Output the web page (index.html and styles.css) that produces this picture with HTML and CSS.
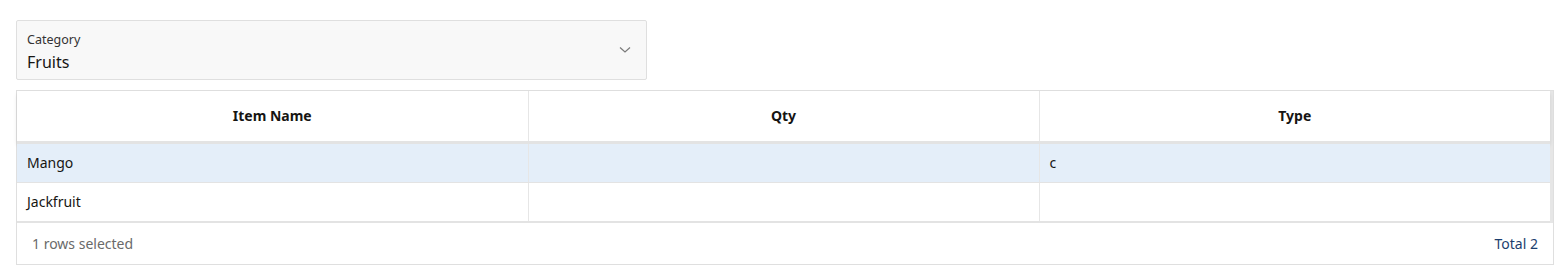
FILE: index.html
```html
<!DOCTYPE html>
<html lang="en">
<head>
  <meta charset="UTF-8" />
  <title>Items by Category</title>
  <link rel="stylesheet" href="styles.css">
</head>
<body>
  <div class="page">
    <div class="select-field">
      <div class="select-text">
        <label class="select-label" for="category">Category</label>
        <div class="select-value" id="category">Fruits</div>
      </div>
      <svg class="chevron" width="12" height="8" viewBox="0 0 12 8" aria-hidden="true">
        <path d="M1 1.5 L6 6 L11 1.5" fill="none" stroke="#7a7a7a" stroke-width="1.2"/>
      </svg>
    </div>

    <div class="grid">
      <div class="grid-body">
        <table class="grid-table">
          <thead>
            <tr>
              <th>Item Name</th>
              <th>Qty</th>
              <th>Type</th>
            </tr>
          </thead>
          <tbody>
            <tr class="selected">
              <td>Mango</td>
              <td></td>
              <td>c</td>
            </tr>
            <tr>
              <td>Jackfruit</td>
              <td></td>
              <td></td>
            </tr>
          </tbody>
        </table>
      </div>
      <div class="grid-footer">
        <span class="selected-count">1 rows selected</span>
        <span class="total">Total 2</span>
      </div>
    </div>
  </div>
</body>
</html>
```

FILE: styles.css
```css
* {
  margin: 0;
  padding: 0;
  box-sizing: border-box;
}

body {
  font-family: 'Noto Sans', 'Open Sans', sans-serif;
  background-color: #fff;
  color: #161513;
}

.page {
  padding: 20px 11px 0 16px;
}

/* Category select */
.select-field {
  width: 631px;
  height: 60px;
  background-color: #f8f8f8;
  border: 1px solid #dfdfdf;
  border-radius: 2px;
  display: flex;
  align-items: center;
  justify-content: space-between;
  padding: 0 15px 0 10px;
}

.select-text {
  display: flex;
  flex-direction: column;
  margin-top: 5px;
}

.select-label {
  font-size: 12.5px;
  line-height: 16px;
  color: #333;
}

.select-value {
  font-size: 16px;
  line-height: 22px;
  margin-top: 3px;
}

/* Grid */
.grid {
  margin-top: 10px;
  border: 1px solid #dfdfdf;
}

.grid-body {
  border-right: 3px solid #e6e6e6;
}

.grid-table {
  width: 100%;
  border-collapse: collapse;
  table-layout: fixed;
  font-size: 14px;
}

.grid-table thead tr {
  box-shadow: 0 3px 4px rgba(0, 0, 0, 0.1);
}

.grid-table th {
  height: 51px;
  font-weight: bold;
  text-align: center;
  border-left: 1px solid #e6e6e6;
  border-bottom: 3px solid #e3e3e3;
}

.grid-table td {
  height: 40px;
  padding: 0 10px;
  text-align: left;
  border-left: 1px solid #e6e6e6;
  border-bottom: 1px solid #e3e3e3;
}

.grid-table th:first-child,
.grid-table td:first-child {
  border-left: none;
}

.grid-table tbody tr:last-child td {
  border-bottom: 2px solid #e3e3e3;
}

.grid-table tr.selected td {
  background-color: #e4eef9;
}

.grid-footer {
  height: 41px;
  display: flex;
  align-items: center;
  justify-content: space-between;
  padding: 0 15px;
  font-size: 14px;
}

.selected-count {
  color: #6a6a6a;
}

.total {
  color: #1c3e6e;
}
```
